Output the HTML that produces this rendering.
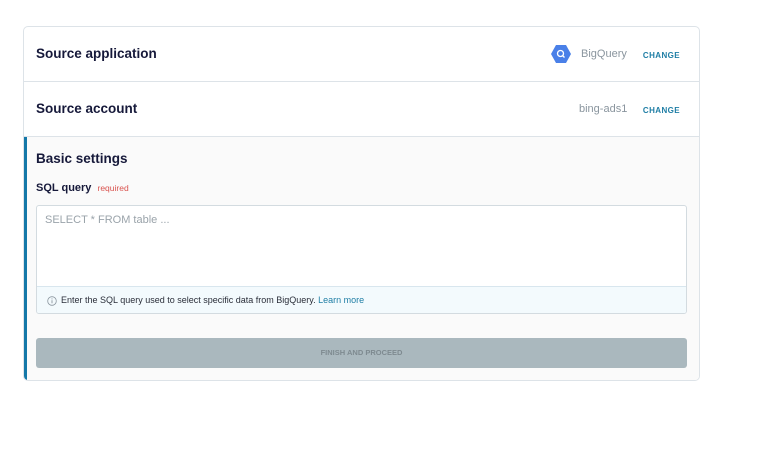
<!DOCTYPE html>
<html><head><style>
*{box-sizing:border-box;margin:0;padding:0}
body{width:768px;height:451px;background:#fff;font-family:"Liberation Sans",sans-serif;position:relative;overflow:hidden}
.card{position:absolute;left:23px;top:26px;width:677px;height:355px;border:1px solid #dde3e8;border-radius:5px;overflow:hidden;background:#fff}
.row{position:absolute;left:0;width:100%;height:55px;border-bottom:1px solid #dde3e8}
.row h2{position:absolute;left:12px;top:19px;font-size:13.5px;font-weight:bold;color:#16193a}
.chg{position:absolute;right:19px;top:24px;font-size:8px;font-weight:bold;color:#1f7ea5;letter-spacing:.4px}
.val{position:absolute;font-size:11px;color:#8a959e;top:21px}
.sec{position:absolute;left:0;top:110px;width:100%;bottom:0;background:#fafafa;border-left:3px solid #1478a8}
</style></head><body>
<div class="card">
 <div class="row" style="top:0">
  <h2>Source application</h2>
  <svg style="position:absolute;left:527px;top:18px" width="20" height="18" viewBox="0 0 20 18"><polygon points="5,0 15,0 20,9 15,18 5,18 0,9" fill="#4a80e8"/><circle cx="9.5" cy="8.5" r="3" fill="none" stroke="#fff" stroke-width="1.3"/><line x1="11.5" y1="10.5" x2="13.5" y2="12.5" stroke="#fff" stroke-width="1.3"/></svg>
  <div class="val" style="left:557px">BigQuery</div>
  <div class="chg">CHANGE</div>
 </div>
 <div class="row" style="top:55px">
  <h2>Source account</h2>
  <div class="val" style="left:555px">bing-ads1</div>
  <div class="chg">CHANGE</div>
 </div>
 <div class="sec">
  <div style="position:absolute;left:9px;top:14px;font-size:13.5px;font-weight:bold;color:#16193a">Basic settings</div>
  <div style="position:absolute;left:9px;top:45px;font-size:11px;font-weight:600;color:#16193a">SQL query <span style="font-size:8.5px;font-weight:normal;color:#d9534f;margin-left:3px">required</span></div>
  <div style="position:absolute;left:9px;top:68px;width:651px;height:109px;border:1px solid #d3dbe0;border-radius:3px;background:#fff;overflow:hidden">
   <div style="position:absolute;left:8px;top:8px;font-size:11px;color:#9aa3aa">SELECT * FROM table ...</div>
   <div style="position:absolute;left:0;top:80px;width:100%;height:29px;border-top:1px solid #d8e6ee;background:#f3fafd;font-size:9px;color:#2b2f3a;padding:8px 0 0 24px">Enter the SQL query used to select specific data from BigQuery. <span style="color:#1f7ea5">Learn more</span>
    <svg style="position:absolute;left:10px;top:9px" width="10" height="10" viewBox="0 0 10 10"><circle cx="5" cy="5" r="4.3" fill="none" stroke="#8a959e" stroke-width=".8"/><line x1="5" y1="4.3" x2="5" y2="7.3" stroke="#8a959e" stroke-width=".9"/><circle cx="5" cy="2.9" r=".55" fill="#8a959e"/></svg>
   </div>
  </div>
  <div style="position:absolute;left:9px;top:201px;width:651px;height:30px;border-radius:3px;background:#aab8be;text-align:center;line-height:30px;font-size:7.5px;font-weight:bold;color:#7e8a90">FINISH AND PROCEED</div>
 </div>
</div>
</body></html>
